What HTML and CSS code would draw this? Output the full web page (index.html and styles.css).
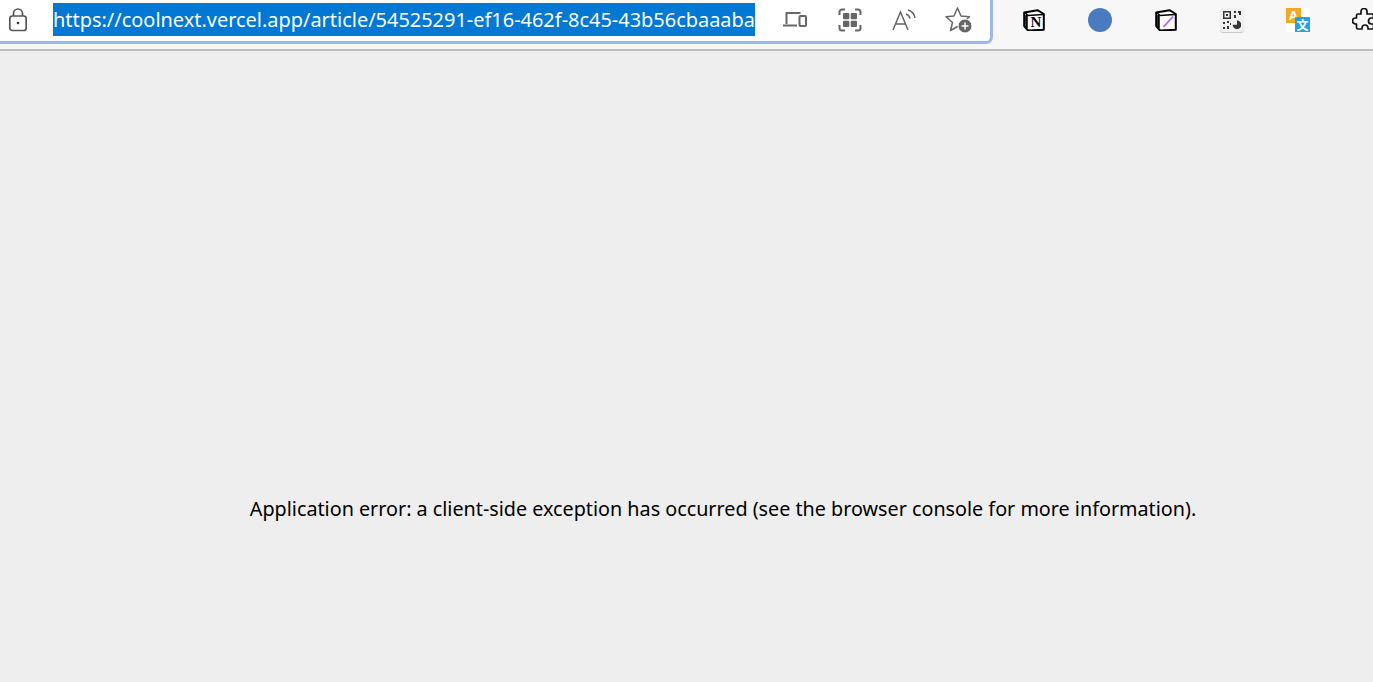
FILE: index.html
```html
<!DOCTYPE html>
<html lang="en">
<head>
  <meta charset="UTF-8">
  <title>Application error</title>
  <link rel="stylesheet" href="styles.css">
</head>
<body>
  <header class="toolbar">
    <div class="address-bar">
      <svg class="lock" width="20" height="26" viewBox="0 0 20 26" fill="none" stroke="#555" stroke-width="1.7">
        <path d="M5.500 9V6.500a4.500 4.500 0 0 1 9 0V9"/>
        <rect x="1.800" y="9" width="16.400" height="14.500" rx="2.500"/>
        <circle cx="10" cy="16" r="1.300" fill="#333" stroke="none"/>
      </svg>
      <span class="url">https://coolnext.vercel.app/article/54525291-ef16-462f-8c45-43b56cbaaaba</span>
      <div class="bar-icons">
        <span class="bar-icon">
          <svg width="24" height="18" viewBox="0 0 24 18" fill="none" stroke="#666" stroke-width="2">
            <path d="M3.500 13V2h14"/>
            <path d="M0 14.500h14"/>
            <rect x="16.500" y="5" width="6.500" height="10" rx="1"/>
          </svg>
        </span>
        <span class="bar-icon">
          <svg width="24" height="24" viewBox="0 0 24 24" fill="none" stroke="#666" stroke-width="2">
            <path d="M7 1.500H4A2.500 2.500 0 0 0 1.500 4v3M17 1.500h3A2.500 2.500 0 0 1 22.500 4v3M7 22.500H4A2.500 2.500 0 0 1 1.500 20v-3M17 22.500h3a2.500 2.500 0 0 0 2.500-2.500v-3"/>
            <g fill="#666" stroke="none">
              <rect x="5" y="5" width="6.300" height="6.300" rx="1"/>
              <rect x="12.700" y="5" width="6.300" height="6.300" rx="1"/>
              <rect x="5" y="12.700" width="6.300" height="6.300" rx="1"/>
              <rect x="12.700" y="12.700" width="6.300" height="6.300" rx="1"/>
            </g>
          </svg>
        </span>
        <span class="bar-icon">
          <svg width="24" height="22" viewBox="0 0 24 22" fill="none" stroke="#666" stroke-width="1.500">
            <path d="M1 21L8.500 3 16 21M3.500 15h10"/>
            <path d="M14 5a6 6 0 0 1 4 4.500M16 1a10 10 0 0 1 7 8"/>
          </svg>
        </span>
        <span class="bar-icon">
          <svg width="28" height="26" viewBox="0 0 28 26" fill="none">
            <path d="M12.500 1l3.500 8 8.500.8L18 15.500l2 8-7.500-4-7 4 2-8L1 9.800 9 9z" stroke="#666" stroke-width="1.500" stroke-linejoin="round"/>
            <circle cx="20" cy="19" r="7" fill="#666" stroke="#fff"/>
            <path d="M20 15.500v7M16.500 19h7" stroke="#fff" stroke-width="1.500"/>
          </svg>
        </span>
      </div>
    </div>
    <div class="extensions">
      <span class="ext">
        <svg width="22" height="22" viewBox="0 0 22 22">
          <path d="M1.200 3.500L14.500 1.200 20.800 5v15.800L5 21.500 1.200 17z" fill="#fff" stroke="#000" stroke-width="2" stroke-linejoin="round"/>
          <path d="M2 3.800L5 6.500 20 5.500" fill="none" stroke="#000" stroke-width="1.500"/>
          <path d="M3.500 6V19" fill="none" stroke="#000" stroke-width="2.500"/>
          <text x="13" y="18" class="notion-n">N</text>
        </svg>
      </span>
      <span class="ext"><span class="dot"></span></span>
      <span class="ext">
        <svg width="22" height="22" viewBox="0 0 22 22">
          <path d="M1.200 3.500L14.500 1.200 20.800 5v15.800L5 21.500 1.200 17z" fill="#fff" stroke="#000" stroke-width="2" stroke-linejoin="round"/>
          <path d="M2 3.800L5 6.500 20 5.500" fill="none" stroke="#000" stroke-width="1.500"/>
          <path d="M3.500 6V19" fill="none" stroke="#000" stroke-width="2.500"/>
          <path d="M8.500 18L18 7.500" stroke="#b45cf5" stroke-width="1.800"/>
        </svg>
      </span>
      <span class="ext">
        <span class="qr-tile">
          <svg width="18" height="18" viewBox="0 0 18 18" fill="#333">
            <path d="M0 0h8v8H0zM1.500 1.500v5h5v-5zM3 3h2v2H3z" fill-rule="evenodd"/>
            <path d="M11 0h2v2h-2zM15 0h3v4h-2V2h-1zM11 4h2v3h-2z"/>
            <path d="M0 11h2v2H0zM4 10h2v2H4zM7 12h1v2H7zM0 16h2v2H0zM4 15h2v3H4z"/>
            <path d="M14 9.500a4.300 4.300 0 1 1-4.300 4.300h4.300z"/>
          </svg>
        </span>
      </span>
      <span class="ext">
        <span class="translate">
          <span class="tr-a">A</span>
          <span class="tr-zh">文</span>
        </span>
      </span>
      <span class="ext">
        <svg width="24" height="24" viewBox="0 0 24 24" fill="none" stroke="#111" stroke-width="1.700" stroke-linejoin="round">
          <path d="M9 3.500a3 3 0 0 1 6 0V6h5a1.500 1.500 0 0 1 1.500 1.500V10h-2a3 3 0 0 0 0 6h2v3.500A1.500 1.500 0 0 1 20 21h-4v-1a3 3 0 0 0-6 0v1H6a1.500 1.500 0 0 1-1.500-1.500V16H3.500a3 3 0 0 1 0-6h1V7.500A1.500 1.500 0 0 1 6 6h3z"/>
        </svg>
      </span>
    </div>
  </header>

  <main class="page">
    <p class="error-msg">Application error: a client-side exception has occurred (see the browser console for more information).</p>
  </main>
</body>
</html>
```

FILE: styles.css
```css
* { box-sizing: border-box; }
html, body { height: 100%; }
body {
  margin: 0;
  display: flex;
  flex-direction: column;
  overflow: hidden;
  background: #eeeeee;
  color: #000;
  font-family: "Noto Sans", "Open Sans", sans-serif;
}

.toolbar {
  display: flex;
  align-items: flex-start;
  flex: none;
  height: 51px;
  background: #f7f7f7;
  border-bottom: 2px solid #bdbdbd;
  overflow: hidden;
}

.address-bar {
  display: flex;
  align-items: center;
  flex: none;
  width: 993px;
  height: 44px;
  padding: 0 0 2px 8px;
  background: #fff;
  border-right: 3px solid #9ab8e8;
  border-bottom: 3px solid #9ab8e8;
  border-bottom-right-radius: 7px;
}
.lock { flex: none; }
.url {
  flex: none;
  margin-left: 25px;
  height: 33px;
  width: 702px;
  line-height: 33px;
  font-size: 19.950px;
  white-space: nowrap;
  overflow: hidden;
  color: #fff;
  background: #0078d4;
}
.bar-icons {
  display: flex;
  margin-left: 13px;
}
.bar-icon {
  display: flex;
  align-items: center;
  justify-content: center;
  width: 54.500px;
  height: 34px;
}

.extensions {
  display: flex;
  flex: none;
  padding: 3px 0 0 8px;
}
.ext {
  display: flex;
  align-items: center;
  justify-content: center;
  width: 66px;
  height: 34px;
}
.notion-n {
  font-family: "Liberation Serif", serif;
  font-size: 15px;
  font-weight: 700;
  text-anchor: middle;
}
.dot {
  width: 24px;
  height: 24px;
  border-radius: 50%;
  background: #4a7bc0;
}
.qr-tile {
  display: flex;
  align-items: center;
  justify-content: center;
  width: 24px;
  height: 24px;
  background: #f0f0f0;
  border-radius: 3px;
  box-shadow: 0 1px 1px rgba(0,0,0,.2);
}
.translate {
  position: relative;
  display: block;
  width: 24px;
  height: 24px;
  background: #fff;
}
.tr-a {
  position: absolute;
  left: 0;
  top: 0;
  width: 15px;
  height: 15px;
  background: #f5a623;
  color: #fff;
  font-size: 13px;
  font-weight: 700;
  line-height: 15px;
  text-align: center;
}
.tr-zh {
  position: absolute;
  right: 0;
  bottom: 0;
  width: 15px;
  height: 15px;
  background: #1fa3e6;
  color: #fff;
  font-family: "Noto Sans CJK SC", sans-serif;
  font-size: 12px;
  font-weight: 700;
  line-height: 15px;
  text-align: center;
}

.page {
  flex: 1;
  display: flex;
  justify-content: center;
  padding: 444px 0 0 73px;
}
.error-msg {
  margin: 0;
  font-size: 19.750px;
  line-height: 27px;
  white-space: nowrap;
}
```
